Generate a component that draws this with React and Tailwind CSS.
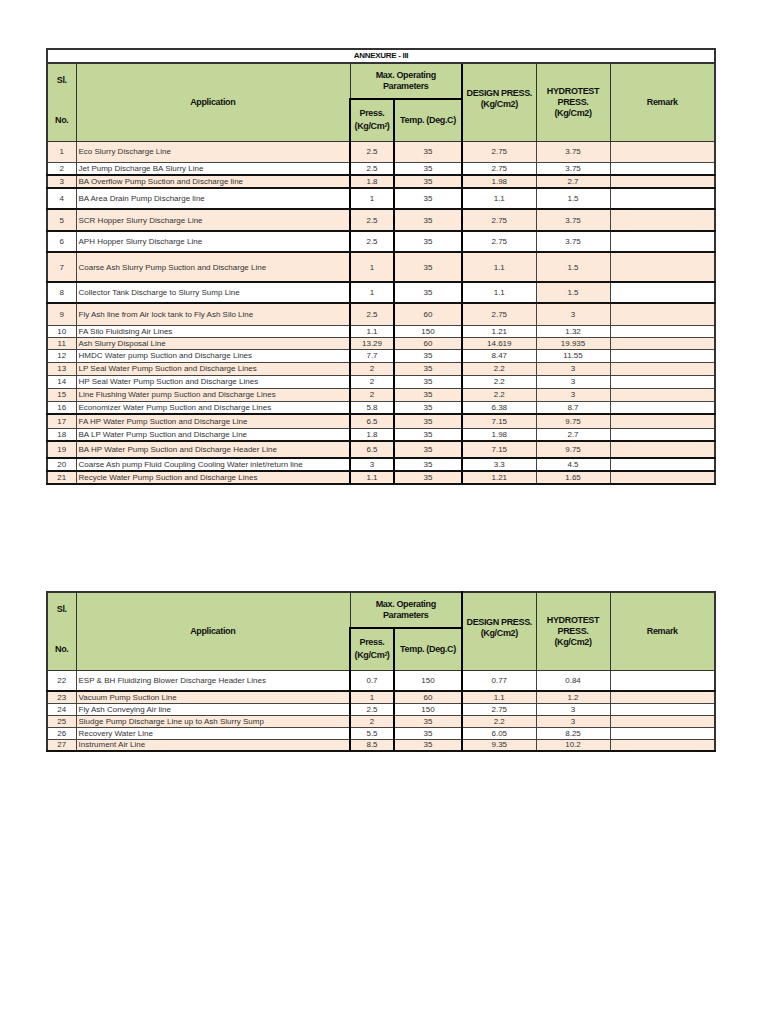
const rows1 = [
  ["1", "Eco Slurry Discharge Line", "2.5", "35", "2.75", "3.75", 21, true, false],
  ["2", "Jet Pump Discharge BA Slurry Line", "2.5", "35", "2.75", "3.75", 13, false, true],
  ["3", "BA Overflow Pump Suction and Discharge  line", "1.8", "35", "1.98", "2.7", 13, true, true],
  ["4", "BA Area Drain Pump Discharge line", "1", "35", "1.1", "1.5", 21, false, true],
  ["5", "SCR Hopper Slurry Discharge Line", "2.5", "35", "2.75", "3.75", 22, true, true],
  ["6", "APH Hopper Slurry Discharge Line", "2.5", "35", "2.75", "3.75", 21, false, true],
  ["7", "Coarse Ash Slurry Pump Suction and Discharge Line", "1", "35", "1.1", "1.5", 30, true, true],
  ["8", "Collector Tank Discharge to Slurry Sump Line", "1", "35", "1.1", "1.5", 21, false, true],
  ["9", "Fly Ash line from Air lock tank to Fly Ash Silo Line", "2.5", "60", "2.75", "3", 22, true, false],
  ["10", "FA Silo Fluidising Air Lines", "1.1", "150", "1.21", "1.32", 12, false, false],
  ["11", "Ash Slurry Disposal Line", "13.29", "60", "14.619", "19.935", 12, true, false],
  ["12", "HMDC Water pump Suction and Discharge Lines", "7.7", "35", "8.47", "11.55", 13, false, false],
  ["13", "LP Seal Water Pump Suction and Discharge Lines", "2", "35", "2.2", "3", 13, true, false],
  ["14", "HP Seal Water Pump Suction and Discharge Lines", "2", "35", "2.2", "3", 13, false, false],
  ["15", "Line Flushing Water pump Suction and Discharge Lines", "2", "35", "2.2", "3", 13, true, false],
  ["16", "Economizer Water Pump Suction and Discharge Lines", "5.8", "35", "6.38", "8.7", 13, false, true],
  ["17", "FA HP Water Pump Suction and Discharge Line", "6.5", "35", "7.15", "9.75", 14, true, false],
  ["18", "BA LP Water Pump Suction and Discharge Line", "1.8", "35", "1.98", "2.7", 13, false, true],
  ["19", "BA HP Water Pump Suction and Discharge Header Line", "6.5", "35", "7.15", "9.75", 17, true, true],
  ["20", "Coarse Ash pump Fluid Coupling Cooling Water inlet/return line", "3", "35", "3.3", "4.5", 13, false, true],
  ["21", "Recycle Water Pump Suction and Discharge Lines", "1.1", "35", "1.21", "1.65", 13, true, true],
];

const rows2 = [
  ["22", "ESP & BH Fluidizing Blower Discharge Header Lines", "0.7", "150", "0.77", "0.84", 21, false, true],
  ["23", "Vacuum Pump Suction Line", "1", "60", "1.1", "1.2", 12, true, false],
  ["24", "Fly Ash Conveying Air line", "2.5", "150", "2.75", "3", 12, false, false],
  ["25", "Sludge Pump Discharge Line up to Ash Slurry Sump", "2", "35", "2.2", "3", 12, true, false],
  ["26", "Recovery Water Line", "5.5", "35", "6.05", "8.25", 12, false, false],
  ["27", "Instrument Air Line", "8.5", "35", "9.35", "10.2", 12, true, true],
];

const font = { fontFamily: '"Liberation Sans", Arial, sans-serif' };

function Cols() {
  return (
    <colgroup>
      <col className="w-[29px]" />
      <col className="w-[274px]" />
      <col className="w-[44px]" />
      <col className="w-[68px]" />
      <col className="w-[74px]" />
      <col className="w-[74px]" />
      <col className="w-[105px]" />
    </colgroup>
  );
}

function Header() {
  const th = "bg-[#c4d79b] border border-[#333] font-bold text-[9px] leading-[11px] tracking-[-0.35px] text-[#111] text-center align-middle p-0";
  return (
    <>
      <tr className="h-[36px]">
        <th rowSpan={2} className={th}>
          <div className="flex flex-col justify-between h-[72px] pt-[9px] pb-[12px]">
            <span>Sl.</span>
            <span>No.</span>
          </div>
        </th>
        <th rowSpan={2} className={th}>Application</th>
        <th colSpan={2} className={th + " border-b-2 border-b-black border-r-2 border-r-black align-top pt-[6px]"}>
          Max. Operating<br />Parameters
        </th>
        <th rowSpan={2} className={th + " pb-[6px]"}>DESIGN PRESS.<br />(Kg/Cm2)</th>
        <th rowSpan={2} className={th}>HYDROTEST<br />PRESS.<br />(Kg/Cm2)</th>
        <th rowSpan={2} className={th}>Remark</th>
      </tr>
      <tr className="h-[42px]">
        <th className={th + " border-l-2 border-l-black border-r-2 border-r-black leading-[13px]"}>
          Press.<br />(Kg/Cm<sup className="text-[5px]">2</sup>)
        </th>
        <th className={th + " border-r-2 border-r-black"}>Temp. (Deg.C)</th>
      </tr>
    </>
  );
}

function Row({ r, extra }) {
  const [no, app, p, t, d, h, height, peach, thick] = r;
  const bg = peach ? "bg-[#fde9d9]" : "bg-white";
  const bb = thick ? "border-b-2 border-b-[#111]" : "border-b border-b-[#444]";
  const td = `${bb} border-t border-t-[#444] border-x border-x-[#444] p-0 text-[8px] leading-[9px] text-[#333] align-middle`;
  return (
    <tr className={bg} style={{ height }}>
      <td className={td + " text-center"}>{no}</td>
      <td className={td + " pl-[2px] text-left whitespace-nowrap overflow-hidden"}>{app}</td>
      <td className={td + " text-center border-l-2 border-l-black border-r-2 border-r-black"}>{p}</td>
      <td className={td + " text-center border-r-2 border-r-black"}>{t}</td>
      <td className={td + " text-center"}>{d}</td>
      <td className={td + " text-center " + (extra ? "bg-[#fde9d9]" : "")}>{h}</td>
      <td className={td}></td>
    </tr>
  );
}

export default function App() {
  return (
    <div className="w-[768px] h-[1024px] bg-white" style={font}>
      <div className="pt-[48px] pl-[46px]">
        <table className="table-fixed border-collapse w-[668px] border-2 border-[#333]">
          <Cols />
          <thead>
            <tr className="h-[14px]">
              <th colSpan={7} className="bg-white border-2 border-[#333] text-[8px] leading-[10px] tracking-[-0.3px] font-bold text-[#111] text-center p-0">
                ANNEXURE - III
              </th>
            </tr>
            <Header />
          </thead>
          <tbody>
            {rows1.map((r) => (
              <Row key={r[0]} r={r} extra={r[0] === "8"} />
            ))}
          </tbody>
        </table>

        <table className="mt-[106px] table-fixed border-collapse w-[668px] border-2 border-[#333]">
          <Cols />
          <thead>
            <Header />
          </thead>
          <tbody>
            {rows2.map((r) => (
              <Row key={r[0]} r={r} />
            ))}
          </tbody>
        </table>
      </div>
    </div>
  );
}
